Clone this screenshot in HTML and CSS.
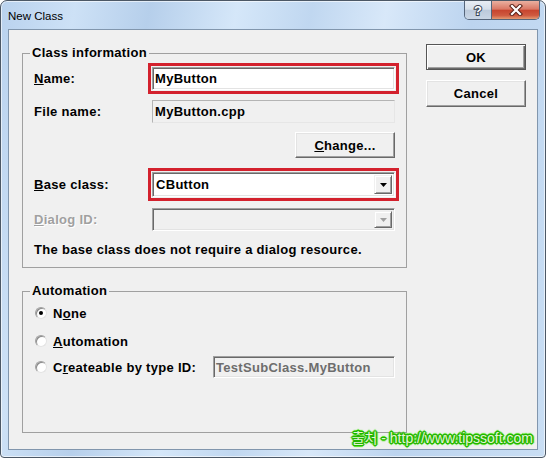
FILE: index.html
```html
<!DOCTYPE html>
<html>
<head>
<meta charset="utf-8">
<link rel="stylesheet" href="styles.css">
</head>
<body>
<div class="window">
    <div class="titlebar">
        <span class="caption">New Class</span>
        <div class="caption-buttons">
            <span class="cap-btn help">
                <svg width="12" height="14" viewBox="0 0 12 14"><text x="6" y="12" text-anchor="middle" font-family="Liberation Sans, sans-serif" font-weight="bold" font-size="13" fill="#fff" stroke="#3a4656" stroke-width="2" paint-order="stroke">?</text></svg>
            </span>
            <span class="cap-btn close">
                <svg width="14" height="12" viewBox="0 0 14 12"><path d="M3 2 L11 10 M11 2 L3 10" stroke="#5a2218" stroke-width="4.2" stroke-linecap="square"/><path d="M3 2 L11 10 M11 2 L3 10" stroke="#fff" stroke-width="2.2" stroke-linecap="square"/></svg>
            </span>
        </div>
    </div>

    <div class="client">
        <div class="groups">
            <fieldset class="group info">
                <legend>Class information</legend>
                <div class="group-body">
                    <div class="row">
                        <label class="label"><u>N</u>ame:</label>
                        <div class="edit marked">MyButton</div>
                    </div>
                    <div class="row row-file">
                        <label class="label">File name:</label>
                        <div class="edit readonly">MyButton.cpp</div>
                    </div>
                    <div class="row row-change">
                        <span class="btn change"><u>C</u>hange...</span>
                    </div>
                    <div class="row row-base">
                        <label class="label"><u>B</u>ase class:</label>
                        <div class="edit combo marked">
                            <span class="value">CButton</span>
                            <span class="drop">
                                <svg width="7" height="4" viewBox="0 0 7 4"><polygon points="0,0 7,0 3.5,4" fill="#000"/></svg>
                            </span>
                        </div>
                    </div>
                    <div class="row row-dialog">
                        <label class="label disabled"><u>D</u>ialog ID:</label>
                        <div class="edit combo off">
                            <span class="value"></span>
                            <span class="drop">
                                <svg width="7" height="4" viewBox="0 0 7 4"><polygon points="0,0 7,0 3.5,4" fill="#a0a0a0"/></svg>
                            </span>
                        </div>
                    </div>
                    <p class="note">The base class does not require a dialog resource.</p>
                </div>
            </fieldset>

            <fieldset class="group automation">
                <legend>Automation</legend>
                <div class="group-body">
                    <div class="option">
                        <span class="radio checked"></span>
                        <span>N<u>o</u>ne</span>
                    </div>
                    <div class="option opt-auto">
                        <span class="radio"></span>
                        <span><u>A</u>utomation</span>
                    </div>
                    <div class="option opt-create">
                        <span class="radio"></span>
                        <span class="create-label">C<u>r</u>eateable by type ID:</span>
                        <div class="edit off typeid">TestSubClass.MyButton</div>
                    </div>
                </div>
            </fieldset>
        </div>

        <div class="actions">
            <span class="btn default">OK</span>
            <span class="btn">Cancel</span>
        </div>
    </div>

    <div class="watermark">출처 - http://www.tipssoft.com</div>
</div>
</body>
</html>
```

FILE: styles.css
```css
* {
    box-sizing: border-box;
}
html, body {
    margin: 0;
}
body {
    width: 546px;
    height: 458px;
    overflow: hidden;
    background: #fff;
    font-family: "Liberation Sans", Arial, sans-serif;
}

.window {
    position: relative;
    width: 546px;
    height: 458px;
    display: flex;
    flex-direction: column;
    border: 1px solid #4c5866;
    border-radius: 7px 7px 4px 4px;
    background: linear-gradient(100deg, #b9d2ee 0%, #cde1f6 12%, #b6cfeb 24%, #d5e7f9 38%, #c0d7f0 50%, #d8e8f9 62%, #bcd4ef 76%, #c9def4 100%);
    box-shadow: inset 0 0 0 1px rgba(255, 255, 255, 0.6);
}

/* title bar */
.titlebar {
    height: 28px;
    display: flex;
    align-items: flex-start;
}
.caption {
    flex: 1;
    margin: 8px 0 0 7px;
    font-size: 11.5px;
    line-height: 14px;
    color: #000;
}
.caption-buttons {
    display: flex;
    height: 19px;
    margin-right: 5px;
    border: 1px solid #55657a;
    border-top: none;
    border-radius: 0 0 5px 5px;
    overflow: hidden;
}
.cap-btn {
    display: flex;
    align-items: center;
    justify-content: center;
}
.help {
    width: 27px;
    border-right: 1px solid #55657a;
    background: linear-gradient(#e8edf4, #d6dfea 45%, #bccadb 52%, #c9d6e5);
}
.close {
    width: 47px;
    background: linear-gradient(#eab0a0, #da7865 45%, #c7452f 52%, #cf5a40 80%, #e49a72);
}

/* client area */
.client {
    flex: 1;
    display: flex;
    margin: 0 7px 7px;
    padding-left: 13px;
    border: 1px solid #8196ad;
    background: #f0f0f0;
    font-size: 13px;
    font-weight: bold;
    letter-spacing: 0.3px;
    color: #000;
}
.groups {
    width: 385px;
    display: flex;
    flex-direction: column;
    padding-top: 16px;
}

.group {
    margin: 0;
    padding: 0;
    min-width: 0;
    border: 1px solid #a0a0a0;
}
.group legend {
    margin-left: 7px;
    padding: 0 2px;
    line-height: 14px;
}
.group-body {
    padding: 7px 11px 9px 11px;
}
.automation {
    margin-top: 16px;
}
.automation .group-body {
    padding: 7px 11px 54px 12px;
}

.row {
    display: flex;
    align-items: center;
}
.row-file {
    margin-top: 10px;
}
.row-change {
    margin-top: 9px;
    justify-content: flex-end;
}
.row-base {
    margin-top: 14px;
}
.row-dialog {
    margin-top: 11px;
}
.label {
    width: 118px;
}
.label.disabled {
    color: #a0a0a0;
    text-shadow: 1px 1px 0 #fff;
}
.note {
    margin: 11px 0 0 0;
    line-height: 16px;
}

/* edits */
.edit {
    width: 243px;
    height: 23px;
    display: flex;
    align-items: center;
    padding-left: 2px;
    background: #fff;
    border: 1px solid;
    border-color: #a0a0a0 #fff #fff #a0a0a0;
    box-shadow: inset 1px 1px 0 #696969, inset -1px -1px 0 #e3e3e3;
}
.edit.readonly {
    background: #f0f0f0;
    border-color: #b4b4b4 #e6e6e6 #e6e6e6 #b4b4b4;
    box-shadow: none;
}
.edit.off {
    background: #f0f0f0;
    color: #6d6d6d;
}
.marked {
    outline: 3px solid #d3212d;
    outline-offset: 1px;
}
.combo {
    height: 25px;
    padding: 2px 2px 2px 3px;
}
.combo.off {
    height: 23px;
}
.combo .value {
    flex: 1;
}
.drop {
    width: 18px;
    height: 100%;
    display: flex;
    align-items: center;
    justify-content: center;
    background: #f0f0f0;
    border: 1px solid;
    border-color: #f0f0f0 #696969 #696969 #f0f0f0;
    box-shadow: inset 1px 1px 0 #fff, inset -1px -1px 0 #a0a0a0;
}

/* buttons */
.btn {
    width: 100px;
    height: 26px;
    display: flex;
    align-items: center;
    justify-content: center;
    background: #f0f0f0;
    border: 1px solid;
    border-color: #fff #696969 #696969 #fff;
    box-shadow: inset -1px -1px 0 #a0a0a0, inset 1px 1px 0 #e3e3e3;
}
.btn.default {
    border-color: #555;
    box-shadow: inset 1px 1px 0 #fff, inset -1px -1px 0 #696969, inset -2px -2px 0 #a0a0a0;
}
.actions {
    display: flex;
    flex-direction: column;
    gap: 10px;
    margin-left: 19px;
    padding-top: 14px;
}
.actions .btn + .btn {
    height: 27px;
}

/* radio options */
.option {
    display: flex;
    align-items: center;
    height: 16px;
}
.opt-auto {
    margin-top: 12px;
}
.opt-create {
    margin-top: 7px;
    height: 22px;
}
.radio {
    position: relative;
    width: 12px;
    height: 12px;
    margin-right: 6px;
    border-radius: 50%;
    background: #fff;
    border: 1px solid;
    border-color: #a0a0a0 #e3e3e3 #e3e3e3 #a0a0a0;
    box-shadow: inset 1px 1px 0 #8a8a8a;
}
.radio.checked::after {
    content: "";
    position: absolute;
    left: 3px;
    top: 3px;
    width: 4px;
    height: 4px;
    border-radius: 50%;
    background: #000;
}
.create-label {
    width: 160px;
}
.typeid {
    width: 182px;
    height: 22px;
}

/* source stamp over the frame */
.watermark {
    position: absolute;
    right: 12px;
    bottom: 10px;
    font-family: "Liberation Sans", "Noto Sans CJK KR", sans-serif;
    font-size: 14px;
    line-height: 18px;
    color: #e4f5d6;
    text-shadow:
        1px 0 0 #22b400, -1px 0 0 #22b400, 0 1px 0 #22b400, 0 -1px 0 #22b400,
        1px 1px 0 #22b400, -1px -1px 0 #22b400, 1px -1px 0 #22b400, -1px 1px 0 #22b400,
        2px 0 1px #3ae000, -2px 0 1px #3ae000, 0 2px 1px #3ae000, 0 -2px 1px #3ae000;
}
```
